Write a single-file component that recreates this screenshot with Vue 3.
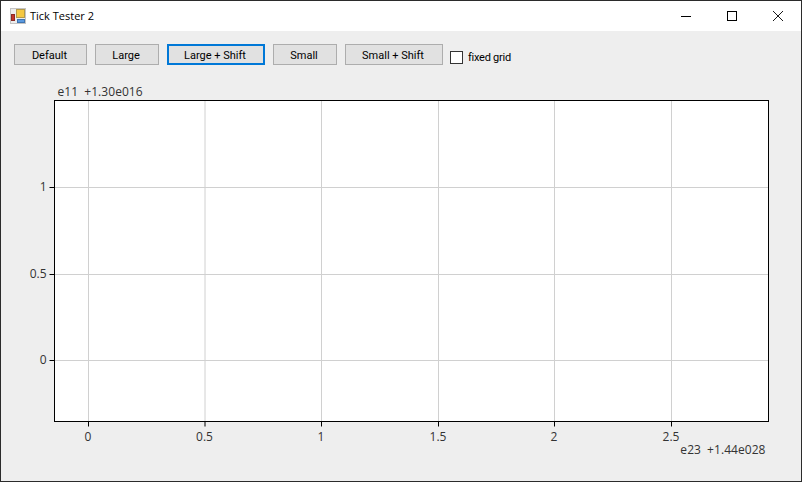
<script setup>
const buttons = [
  { label: 'Default', width: 73 },
  { label: 'Large', width: 64 },
  { label: 'Large + Shift', width: 98, focused: true },
  { label: 'Small', width: 64 },
  { label: 'Small + Shift', width: 98 },
]
const xTicks = [
  { label: '0', x: 34 },
  { label: '0.5', x: 150.5 },
  { label: '1', x: 267 },
  { label: '1.5', x: 384 },
  { label: '2', x: 500 },
  { label: '2.5', x: 617 },
]
const yTicks = [
  { label: '1', y: 87 },
  { label: '0.5', y: 174 },
  { label: '0', y: 260 },
]
</script>

<template>
  <div class="window">
    <header class="titlebar">
      <svg class="app-icon" width="16" height="16" viewBox="0 0 16 16">
        <rect x="0.5" y="0.5" width="15" height="15" fill="#ececec" stroke="#c4c4c4" />
        <rect x="6.5" y="1.5" width="8" height="8" fill="#f5c842" stroke="#b39a4a" />
        <rect x="1.5" y="6.5" width="3" height="6" fill="#c4342a" stroke="#8c2a24" />
        <rect x="7.5" y="11.5" width="7" height="3" fill="#5b9ae0" stroke="#3f74b0" />
      </svg>
      <span class="title">Tick Tester 2</span>
      <div class="controls">
        <svg width="12" height="12" viewBox="0 0 12 12" class="ctl-min"><path d="M1 6.5H11" stroke="#000" fill="none" /></svg>
        <svg width="12" height="12" viewBox="0 0 12 12" class="ctl-max"><rect x="1.5" y="1.5" width="9" height="9" stroke="#000" fill="none" /></svg>
        <svg width="12" height="12" viewBox="0 0 12 12" class="ctl-close"><path d="M1 1L11 11M11 1L1 11" stroke="#000" fill="none" stroke-width="0.9" /></svg>
      </div>
    </header>

    <div class="client">
      <div class="toolbar">
        <button
          v-for="b in buttons"
          :key="b.label"
          class="btn"
          :class="{ focused: b.focused }"
          :style="{ width: b.width + 'px' }"
        >{{ b.label }}</button>
        <label class="check"><span class="box"></span><span class="check-label">fixed grid</span></label>
      </div>

      <svg class="chart" width="800" height="400" viewBox="0 0 800 400">
        <g transform="translate(53.5 35.5)">
          <rect x="0" y="0" width="714" height="321" fill="#fff" />
          <g stroke="#d0d0d0">
            <line v-for="t in xTicks" :key="t.label" :x1="t.x" :x2="t.x" y1="0" y2="321" />
            <line v-for="t in yTicks" :key="t.label" x1="0" x2="714" :y1="t.y" :y2="t.y" />
          </g>
          <rect x="0" y="0" width="714" height="321" fill="none" stroke="#000" />
          <g stroke="#000">
            <line v-for="t in xTicks" :key="t.label" :x1="t.x" :x2="t.x" y1="321" y2="326" />
            <line v-for="t in yTicks" :key="t.label" x1="-5" x2="0" :y1="t.y" :y2="t.y" />
          </g>
          <text v-for="t in xTicks" :key="t.label" :x="t.x - 0.5" y="340" text-anchor="middle">{{ t.label }}</text>
          <text v-for="t in yTicks" :key="t.label" x="-8" :y="t.y + 3.5" text-anchor="end">{{ t.label }}</text>
          <text x="3" y="-5" class="mult">e11 +1.30e016</text>
          <text x="711" y="353.5" text-anchor="end" class="mult">e23 +1.44e028</text>
        </g>
      </svg>
    </div>
  </div>
</template>

<style scoped>
.window {
  width: 802px;
  height: 482px;
  box-sizing: border-box;
  border: 1px solid #2b2b2b;
  display: flex;
  flex-direction: column;
  font-family: Roboto, "Noto Sans", sans-serif;
  font-size: 11px;
  color: #000;
  overflow: hidden;
}
.titlebar {
  height: 30px;
  background: #fff;
  display: flex;
  align-items: center;
  padding-left: 9px;
  flex: none;
}
.app-icon { margin-right: 4px; }
.title { font-family: "Open Sans", sans-serif; font-size: 11px; margin-bottom: 2px; }
.controls {
  margin-left: auto;
  display: flex;
  align-items: center;
  gap: 34px;
  padding-right: 17px;
}
.client {
  flex: 1;
  background: #eeeeee;
  display: flex;
  flex-direction: column;
  padding-top: 13px;
  min-height: 0;
}
.toolbar {
  display: flex;
  align-items: flex-start;
  gap: 8px;
  padding-left: 13px;
  height: 21px;
  flex: none;
}
.btn {
  height: 21px;
  box-sizing: border-box;
  border: 1px solid #adadad;
  background: #e1e1e1;
  font: inherit;
  color: #000;
  padding: 2px 2px 0 0;
  line-height: 17px;
}
.btn.focused {
  border: 2px solid #0078d7;
  line-height: 15px;
}
.check {
  display: flex;
  align-items: center;
  margin-left: -1px;
  margin-top: 6px;
}
.box {
  width: 13px;
  height: 13px;
  box-sizing: border-box;
  border: 1px solid #333;
  background: #fff;
}
.check-label { margin-left: 5px; letter-spacing: -0.25px; padding-top: 1px; }
.chart { display: block; flex: none; }
.chart text {
  font-family: "Open Sans", "Noto Sans", sans-serif;
  font-size: 12px;
  fill: #333;
  stroke: none;
}
.chart .mult { word-spacing: 3px; letter-spacing: 0.05px; }
</style>
